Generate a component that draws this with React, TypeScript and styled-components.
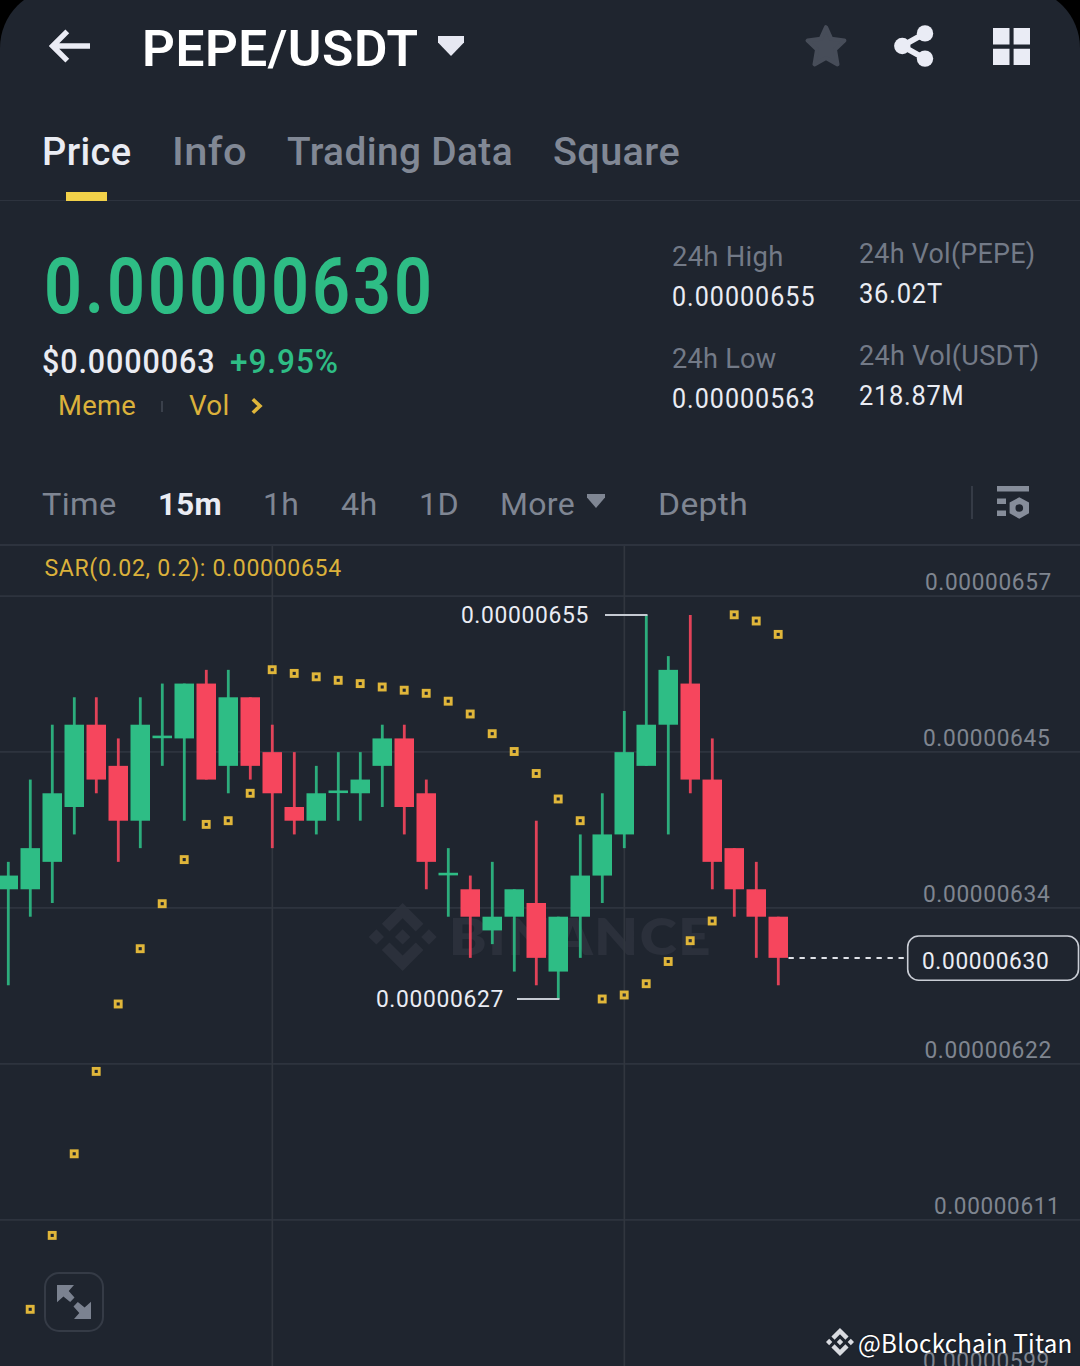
import React, { useLayoutEffect, useRef, useState } from "react";
import styled, { createGlobalStyle } from "styled-components";

const color = {
  bg: "#1f252f",
  line: "#2d333e",
  text: "#eaecf3",
  muted: "#7f8693",
  dim: "#737a87",
  green: "#2ebd85",
  red: "#f6465d",
  yellow: "#dbb13b",
};

const GlobalStyle = createGlobalStyle`
  * { box-sizing: border-box; }
  body { margin: 0; background: #000; }
`;

const Page = styled.div`
  width: 1080px;
  height: 1366px;
  overflow: hidden;
  background: #000;
  font-family: Roboto, "Liberation Sans", sans-serif;
  color: ${color.text};
`;

const Screen = styled.main`
  position: relative;
  display: flex;
  flex-direction: column;
  height: 1378px;
  margin-top: -12px;
  padding-top: 12px;
  border-radius: 60px 60px 0 0;
  overflow: hidden;
  background: ${color.bg};
`;

/* ---------- text fitted to a column width ---------- */

const FitBox = styled.span<{ $width: number }>`
  display: block;
  flex: none;
  width: ${(p) => p.$width}px;
`;

const FitInner = styled.span<{ $track: number }>`
  display: inline-block;
  white-space: nowrap;
  transform-origin: 0 50%;
  letter-spacing: ${(p) => p.$track}em;
  vertical-align: top;
`;

function Fit({ width, track = 0.01, children }: { width: number; track?: number; children: string }) {
  const ref = useRef<HTMLSpanElement>(null);
  const [scale, setScale] = useState(1);
  useLayoutEffect(() => {
    if (ref.current) setScale(width / parseFloat(getComputedStyle(ref.current).width));
  }, [width, children]);
  return (
    <FitBox $width={width}>
      <FitInner ref={ref} $track={track} style={{ transform: `scaleX(${scale})` }}>
        {children}
      </FitInner>
    </FitBox>
  );
}

/* ---------- header ---------- */

const Header = styled.header`
  display: flex;
  align-items: center;
  flex: none;
  height: 92px;
  padding: 0 50px 0 49px;
`;

const Title = styled.h1`
  margin: 5px 0 0 51px;
  font-size: 50px;
  font-weight: 600;
  line-height: 60px;
  color: #fff;
`;

const TitleCaret = styled.svg`
  margin-left: 19px;
`;

const Actions = styled.div`
  display: flex;
  align-items: center;
  margin-left: auto;
`;

const ShareIcon = styled.svg`
  margin: 0 59px 0 47px;
`;

/* ---------- tabs ---------- */

const TabBar = styled.nav`
  display: flex;
  flex: none;
  gap: 40px;
  height: 109px;
  padding-left: 42px;
  border-bottom: 1px solid ${color.line};
`;

const Tab = styled.div<{ $active?: boolean }>`
  display: flex;
  flex-direction: column;
  align-items: center;
  padding-top: 26.5px;
  font-size: 38px;
  font-weight: 500;
  line-height: 66px;
  color: ${(p) => (p.$active ? color.text : "#818895")};
`;

const TabMark = styled.i`
  width: 41px;
  height: 8.5px;
  margin-top: 7.5px;
  flex: none;
  background: #f2d149;
`;

/* ---------- summary ---------- */

const Summary = styled.section`
  display: flex;
  flex: none;
  height: 261px;
`;

const PriceColumn = styled.div`
  width: 671.5px;
  padding: 44px 0 0 42px;
`;

const Price = styled.div`
  margin-left: 1.5px;
  font-size: 77.5px;
  font-weight: 600;
  line-height: 84px;
  color: ${color.green};
`;

const FiatRow = styled.div`
  display: flex;
  gap: 14px;
  margin-top: 13px;
  font-size: 33.5px;
  font-weight: 500;
  line-height: 40px;
`;

const Change = styled.span`
  font-size: 32.5px;
  color: ${color.green};
`;

const TagRow = styled.div`
  display: flex;
  align-items: center;
  margin: 9px 0 0 16px;
  font-size: 27.5px;
  line-height: 30px;
  color: ${color.yellow};
`;

const TagDivider = styled.i`
  width: 2px;
  height: 11px;
  margin: 0 25.5px 0 25px;
  background: #3a404b;
`;

const TagArrow = styled.svg`
  margin: -1px 0 0 22px;
`;

const StatColumn = styled.dl<{ $width: number; $top: number }>`
  width: ${(p) => p.$width}px;
  margin: 0;
  padding-top: ${(p) => p.$top}px;
  font-size: 28px;
  line-height: 40px;
`;

const StatLabel = styled.dt`
  color: ${color.dim};
`;

const StatValue = styled.dd`
  margin: 0 0 22px;
  color: ${color.text};
`;

/* ---------- intervals ---------- */

const IntervalBar = styled.nav`
  display: flex;
  align-items: center;
  flex: none;
  height: 84px;
  padding: 4px 51px 0 41.5px;
  border-bottom: 2px solid ${color.line};
  font-size: 31.5px;
  line-height: 40px;
  color: ${color.muted};
`;

const Interval = styled.div<{ $active?: boolean }>`
  margin-right: 41.6px;
  font-weight: ${(p) => (p.$active ? 700 : 400)};
  color: ${(p) => (p.$active ? color.text : "inherit")};
`;

const MoreInterval = styled.div`
  display: flex;
  align-items: center;
  gap: 12px;
  margin-right: 53px;
`;

const MoreCaret = styled.svg`
  margin-top: -8px;
`;

const BarDivider = styled.i`
  width: 2px;
  height: 33px;
  margin: -6px 24px 0 auto;
  background: #353b46;
`;

const SettingsIcon = styled.svg`
  margin-top: -6px;
`;

/* ---------- chart ---------- */

const ChartArea = styled.section`
  position: relative;
  flex: none;
  height: 820px;
`;

const ChartSvg = styled.svg`
  display: block;
`;

const ExpandButton = styled.button`
  position: absolute;
  left: 44px;
  top: 726px;
  display: grid;
  place-items: center;
  width: 60px;
  height: 60px;
  padding: 0;
  border: 2.5px solid #353b46;
  border-radius: 15px;
  background: transparent;
`;

const Author = styled.div`
  position: absolute;
  right: 8px;
  bottom: 0;
  display: flex;
  align-items: center;
  gap: 4px;
  height: 48px;
  font-family: "Noto Sans CJK SC", "Noto Sans", sans-serif;
  font-size: 25px;
  font-weight: 400;
  line-height: 48px;
  color: #fff;
  text-shadow: 0 0 2px rgba(0, 0, 0, 0.5);
`;

const LOGO =
  "M16.624 13.9202l2.7175 2.7154-7.353 7.353-7.353-7.352 2.7175-2.7164 4.6355 4.6595 4.6356-4.6595zm4.6366-4.6366L24 12l-2.7154 2.7164L18.5682 12l2.6924-2.7164zm-9.272.001l2.7163 2.6914-2.7164 2.7174v-.001L9.2721 12l2.7164-2.7154zm-9.2722-.001L5.4088 12l-2.6914 2.6924L0 12l2.7164-2.7164zM11.9885.0115l7.353 7.329-2.7174 2.7154-4.6356-4.6356-4.6355 4.6595-2.7174-2.7154 7.353-7.353z";

// [direction, high, body top, body bottom, low], counted in ticks below 0.00000655
type Candle = ["g" | "r", number, number, number, number];
const candles: Candle[] = [
  ["g", 18, 19, 20, 27], ["g", 12, 17, 20, 22], ["g", 8, 13, 18, 21], ["g", 6, 8, 14, 16],
  ["r", 6, 8, 12, 13], ["r", 9, 11, 15, 18], ["g", 6, 8, 15, 17], ["g", 5, 9, 9, 11],
  ["g", 5, 5, 9, 15], ["r", 4, 5, 12, 12], ["g", 4, 6, 11, 13], ["r", 6, 6, 11, 12],
  ["r", 8, 10, 13, 17], ["r", 10, 14, 15, 16], ["g", 11, 13, 15, 16], ["g", 10, 13, 13, 15],
  ["g", 10, 12, 13, 15], ["g", 8, 9, 11, 14], ["r", 8, 9, 14, 16], ["r", 12, 13, 18, 20],
  ["g", 17, 19, 19, 22], ["r", 19, 20, 22, 25], ["g", 18, 22, 23, 24], ["g", 20, 20, 22, 26],
  ["r", 15, 21, 25, 27], ["g", 22, 22, 26, 28], ["g", 16, 19, 22, 25], ["g", 13, 16, 19, 21],
  ["g", 7, 10, 16, 17], ["g", 0, 8, 11, 11], ["g", 3, 4, 8, 16], ["r", 0, 5, 12, 13],
  ["r", 9, 12, 18, 20], ["r", 17, 17, 20, 22], ["r", 18, 20, 22, 25], ["r", 22, 22, 25, 27],
];

// parabolic SAR marks, starting at the second candle
const sar = [
  1309.3, 1235.4, 1153.8, 1071.4, 1004, 948.7, 903.7, 859.6, 824.4, 820.7, 793.3, 669.7, 673.4,
  676.8, 680.3, 683.6, 687, 690.2, 693.3, 701.2, 714, 733.7, 751.5, 773.5, 799, 820.7, 999, 995,
  983.7, 961.5, 940.7, 921, 614.8, 621, 634.4,
];

const axis = [
  { text: "0.00000657", x: 924.5, y: 590.3, w: 127 },
  { text: "0.00000645", x: 922.5, y: 745.8, w: 127.5 },
  { text: "0.00000634", x: 922.5, y: 902, w: 127.5 },
  { text: "0.00000622", x: 924, y: 1058, w: 127.5 },
  { text: "0.00000611", x: 933.5, y: 1214, w: 126.5 },
  { text: "0.00000599", x: 922.5, y: 1368.5, w: 127 },
];

const TOP = 615;
const TICK = 13.714;
const px = (i: number) => 8.3 + 22 * i;
const py = (t: number) => TOP + t * TICK;

function Label({ x, y, w, fill, size = 24, children }: { x: number; y: number; w: number; fill: string; size?: number; children: string }) {
  return (
    <text x={x + 0.4} y={y} fontSize={size} fill={fill} textLength={w} lengthAdjust="spacingAndGlyphs" letterSpacing="0.7">
      {children}
    </text>
  );
}

function Chart() {
  return (
    <ChartSvg width="1080" height="820" viewBox="0 546 1080 820" fontFamily='Roboto, "Liberation Sans", sans-serif'>
      <g fill="#2b303b">
        <path d={LOGO} transform="translate(368.7 903) scale(2.83)" />
        <text x="449" y="955" fontFamily="Lato, sans-serif" fontWeight="800" fontSize="51.5" textLength="263" lengthAdjust="spacingAndGlyphs" letterSpacing="1.5">
          BINANCE
        </text>
      </g>
      <g fill={color.line}>
        {[595.2, 751, 907, 1063, 1219].map((y) => (
          <rect key={y} x="0" y={y} width="1080" height="1.8" />
        ))}
        {[271.5, 623.5].map((x) => (
          <rect key={x} x={x} y="545" width="1.7" height="821" fill="#31363f" />
        ))}
      </g>
      {candles.map(([dir, high, top, bottom, low], i) => {
        const fill = dir === "g" ? color.green : color.red;
        const flat = top === bottom;
        return (
          <g key={i} fill={fill}>
            <rect x={px(i) - 1.4} y={py(high)} width="2.8" height={py(low) - py(high)} opacity="0.9" />
            <rect
              x={px(i) - 9.8}
              y={flat ? py(top) - 2.8 : py(top)}
              width="19.5"
              height={flat ? 2.6 : py(bottom) - py(top)}
            />
          </g>
        );
      })}
      <g fill="none" stroke="#e0b63a" strokeWidth="2.9">
        {sar.map((y, i) => (
          <rect key={i} x={px(i + 1) - 3.1} y={y - 3} width="6" height="6" />
        ))}
      </g>
      <path d="M605 615H647.5M517 999H559.5" stroke="#c5cad2" strokeWidth="1.8" />
      <Label x={44} y={576.3} w={297.5} size={24.5} fill={color.yellow}>SAR(0.02, 0.2): 0.00000654</Label>
      <Label x={460.5} y={623.3} w={128} fill={color.text}>0.00000655</Label>
      <Label x={375.5} y={1007.3} w={128} fill={color.text}>0.00000627</Label>
      {axis.map((a) => (
        <Label key={a.text} x={a.x} y={a.y} w={a.w} fill="#7f8590">{a.text}</Label>
      ))}
      <path d="M788.5 958H907" stroke="#dfe2e8" strokeWidth="1.8" strokeDasharray="5.3 5.7" />
      <rect x="907.7" y="936" width="170.8" height="44.2" rx="11" fill={color.bg} stroke="#c9cdd5" strokeWidth="1.6" />
      <Label x={921.5} y={968.6} w={127.5} fill={color.text}>0.00000630</Label>
    </ChartSvg>
  );
}

export default function App() {
  return (
    <Page>
      <GlobalStyle />
      <Screen>
        <Header>
          <svg width="42" height="34" viewBox="0 0 42 34" fill="none" stroke="#eaecf5" strokeWidth="5.4">
            <path d="M3.5 17H41M18.3 2.3L3.6 17L18.3 31.7" />
          </svg>
          <Title>
            <Fit width={276.5} track={0.01}>PEPE/USDT</Fit>
          </Title>
          <TitleCaret width="26" height="20" viewBox="0 0 26 20" fill="#e6e8f2">
            <path d="M0 0H26V6.5L13 20L0 6.5Z" />
          </TitleCaret>
          <Actions>
            <svg width="42" height="42" viewBox="0 0 42 42" fill="#474d59" stroke="#474d59" strokeWidth="4" strokeLinejoin="round">
              <path d="M21 2.2L26.3 13.8L39.4 15.6L30 24.6L32.5 39.4L21 33L9.5 39.4L12 24.6L2.6 15.6L15.7 13.8Z" />
            </svg>
            <ShareIcon width="40" height="42" viewBox="0 0 40 42" fill="#eaecf5">
              <path d="M31 8.3L8.3 21L31 33.7" fill="none" stroke="#eaecf5" strokeWidth="5.8" />
              <circle cx="8.3" cy="21" r="8.2" />
              <circle cx="31" cy="8.4" r="8.2" />
              <circle cx="31" cy="33.6" r="8.2" />
            </ShareIcon>
            <svg width="37" height="37" viewBox="0 0 37 37" fill="#eaecf5">
              <path d="M0 0H16.5V16.5H0ZM20.6 0H37V16.5H20.6ZM0 20.8H16.5V37H0ZM20.6 20.8H37V37H20.6Z" />
            </svg>
          </Actions>
        </Header>

        <TabBar>
          <Tab $active>
            <Fit width={89.5}>Price</Fit>
            <TabMark />
          </Tab>
          <Tab><Fit width={75}>Info</Fit></Tab>
          <Tab><Fit width={226}>Trading Data</Fit></Tab>
          <Tab><Fit width={127}>Square</Fit></Tab>
        </TabBar>

        <Summary>
          <PriceColumn>
            <Price><Fit width={391} track={0.045}>0.00000630</Fit></Price>
            <FiatRow>
              <Fit width={173.5} track={0.03}>$0.0000063</Fit>
              <Change><Fit width={109} track={0.03}>+9.95%</Fit></Change>
            </FiatRow>
            <TagRow>
              <Fit width={78}>Meme</Fit>
              <TagDivider />
              <Fit width={40.5}>Vol</Fit>
              <TagArrow width="12" height="16" viewBox="0 0 12 16" fill="none" stroke="#e0b63a" strokeWidth="3.6">
                <path d="M1.8 1.3L9 8L1.8 14.7" />
              </TagArrow>
            </TagRow>
          </PriceColumn>
          <StatColumn $width={187.5} $top={36}>
            <StatLabel><Fit width={111.5}>24h High</Fit></StatLabel>
            <StatValue><Fit width={143.5} track={0.04}>0.00000655</Fit></StatValue>
            <StatLabel><Fit width={104.5}>24h Low</Fit></StatLabel>
            <StatValue><Fit width={143.5} track={0.04}>0.00000563</Fit></StatValue>
          </StatColumn>
          <StatColumn $width={200} $top={33}>
            <StatLabel><Fit width={176.5}>24h Vol(PEPE)</Fit></StatLabel>
            <StatValue><Fit width={84} track={0.03}>36.02T</Fit></StatValue>
            <StatLabel><Fit width={180.5}>24h Vol(USDT)</Fit></StatLabel>
            <StatValue><Fit width={105.5} track={0.03}>218.87M</Fit></StatValue>
          </StatColumn>
        </Summary>

        <IntervalBar>
          <Interval><Fit width={74.5}>Time</Fit></Interval>
          <Interval $active><Fit width={64}>15m</Fit></Interval>
          <Interval><Fit width={36}>1h</Fit></Interval>
          <Interval><Fit width={36.5}>4h</Fit></Interval>
          <Interval><Fit width={40}>1D</Fit></Interval>
          <MoreInterval>
            <Fit width={75}>More</Fit>
            <MoreCaret width="18" height="14" viewBox="0 0 18 14" fill="#7f8693">
              <path d="M0 0H18V3.5L9 14L0 3.5Z" />
            </MoreCaret>
          </MoreInterval>
          <Fit width={90}>Depth</Fit>
          <BarDivider />
          <SettingsIcon width="32" height="33" viewBox="0 0 32 33" fill="#868d9a">
            <path d="M0 0H32V5.6H0ZM0 12.4H9V18H0ZM0 24.4H9V30H0Z" />
            <path
              fillRule="evenodd"
              d="M22.3 11.2L32 16.5V27.3L22.3 32.8L12.6 27.3V16.5ZM22.3 18.2A3.8 3.8 0 1 0 22.3 25.8A3.8 3.8 0 1 0 22.3 18.2Z"
            />
          </SettingsIcon>
        </IntervalBar>

        <ChartArea>
          <Chart />
          <ExpandButton aria-label="Expand chart">
            <svg width="34" height="34" viewBox="0 0 34 34" fill="#7b8290">
              <path d="M0 0H17L11.7 5.9L17.5 12.6L13.2 17L6.4 11.4L0 17.2ZM34 34H17L22.3 28.1L16.5 21.4L20.8 17L27.6 22.6L34 16.8Z" />
            </svg>
          </ExpandButton>
          <Author>
            <svg width="28" height="28" viewBox="0 0 24 24" fill="#d9dbe0">
              <path d={LOGO} />
            </svg>
            <Fit width={214.5} track={0.01}>@Blockchain Titan</Fit>
          </Author>
        </ChartArea>
      </Screen>
    </Page>
  );
}
